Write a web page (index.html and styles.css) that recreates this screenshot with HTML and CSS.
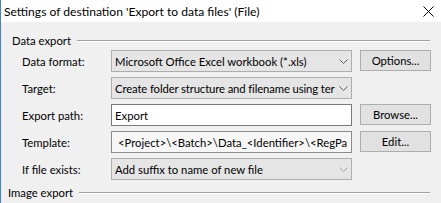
FILE: index.html
```html
<!DOCTYPE html>
<html>
<head>
<meta charset="utf-8">
<link rel="stylesheet" href="styles.css">
</head>
<body>
<div class="window">
  <div class="titlebar">
    <span class="title">Settings of destination 'Export to data files' (File)</span>
    <svg class="close" width="11" height="11" viewBox="0 0 11 11"><path d="M0.5 0.5 L10.5 10.5 M10.5 0.5 L0.5 10.5" stroke="#000" stroke-width="1" fill="none"/></svg>
  </div>
  <div class="body">
    <div class="group-head first"><span>Data export</span><div class="rule"></div></div>
    <div class="form">
      <div class="label">Data format:</div>
      <div class="combo"><span class="val">Microsoft Office Excel workbook (*.xls)</span><svg class="chev" width="9" height="5" viewBox="0 0 9 5"><path d="M0.5 0.5 L4.5 4.5 L8.5 0.5" stroke="#606060" fill="none"/></svg></div>
      <div class="btn">Options...</div>

      <div class="label">Target:</div>
      <div class="combo"><span class="val tight">Create folder structure and filename using ter</span><svg class="chev" width="9" height="5" viewBox="0 0 9 5"><path d="M0.5 0.5 L4.5 4.5 L8.5 0.5" stroke="#606060" fill="none"/></svg></div>
      <div></div>

      <div class="label">Export path:</div>
      <div class="textbox">Export</div>
      <div class="btn">Browse...</div>

      <div class="label">Template:</div>
      <div class="textbox readonly">&lt;Project&gt;\&lt;Batch&gt;\Data_&lt;Identifier&gt;\&lt;RegPa</div>
      <div class="btn">Edit...</div>

      <div class="label">If file exists:</div>
      <div class="combo"><span class="val">Add suffix to name of new file</span><svg class="chev" width="9" height="5" viewBox="0 0 9 5"><path d="M0.5 0.5 L4.5 4.5 L8.5 0.5" stroke="#a0a0a0" fill="none"/></svg></div>
      <div></div>
    </div>
    <div class="group-head second"><span>Image export</span><div class="rule"></div></div>
  </div>
</div>
</body>
</html>
```
FILE: styles.css
```css
html, body {
  margin: 0;
  padding: 0;
  background: #f0f0f0;
}
body {
  font-family: "Lato", "Noto Sans", sans-serif;
  font-size: 11.3px;
  color: #000;
  overflow: hidden;
  width: 441px;
  height: 203px;
}
.window {
  border-left: 1px solid #3b83d4;
  height: 203px;
  box-sizing: border-box;
}
.titlebar {
  height: 22px;
  background: #fff;
  display: flex;
  align-items: center;
  justify-content: space-between;
  padding-left: 3px;
  padding-right: 7px;
}
.title {
  font-size: 12.1px;
}
.body {
  padding: 0 11px 0 11px;
}
.group-head {
  display: flex;
  align-items: center;
  height: 14px;
}
.group-head.first {
  margin-top: 11px;
}
.group-head.second {
  margin-top: 5px;
  margin-left: -4px;
}
.group-head span {
  padding-right: 6px;
}
.rule {
  flex: 1;
  height: 1px;
  background: #a0a0a0;
  border-bottom: 1px solid #fff;
  margin-top: 2px;
}
.form {
  display: grid;
  grid-template-columns: 82px 241px 72px;
  column-gap: 7px;
  row-gap: 5px;
  grid-auto-rows: 22px;
  margin-top: 3px;
  padding-left: 10px;
}
.label {
  display: flex;
  align-items: center;
}
.combo {
  background: #e5e5e5;
  border: 1px solid #adadad;
  box-sizing: border-box;
  display: flex;
  align-items: center;
  padding-left: 3px;
  padding-right: 3px;
  overflow: hidden;
}
.combo .val {
  flex: 1;
  white-space: nowrap;
  overflow: hidden;
}
.combo .val.tight {
  letter-spacing: -0.12px;
}
.chev {
  margin-left: 2px;
  flex: none;
}
.textbox {
  background: #fff;
  border: 1px solid #7a7a7a;
  box-sizing: border-box;
  display: flex;
  align-items: center;
  padding-left: 3px;
  white-space: nowrap;
  overflow: hidden;
}
.textbox.readonly {
  background: #f7f7f7;
  border-color: #8c8c8c;
  padding-left: 6px;
}
.btn {
  background: #e1e1e1;
  border: 1px solid #adadad;
  box-sizing: border-box;
  display: flex;
  align-items: center;
  justify-content: center;
  margin: 0 0 1px 1px;
}
```
